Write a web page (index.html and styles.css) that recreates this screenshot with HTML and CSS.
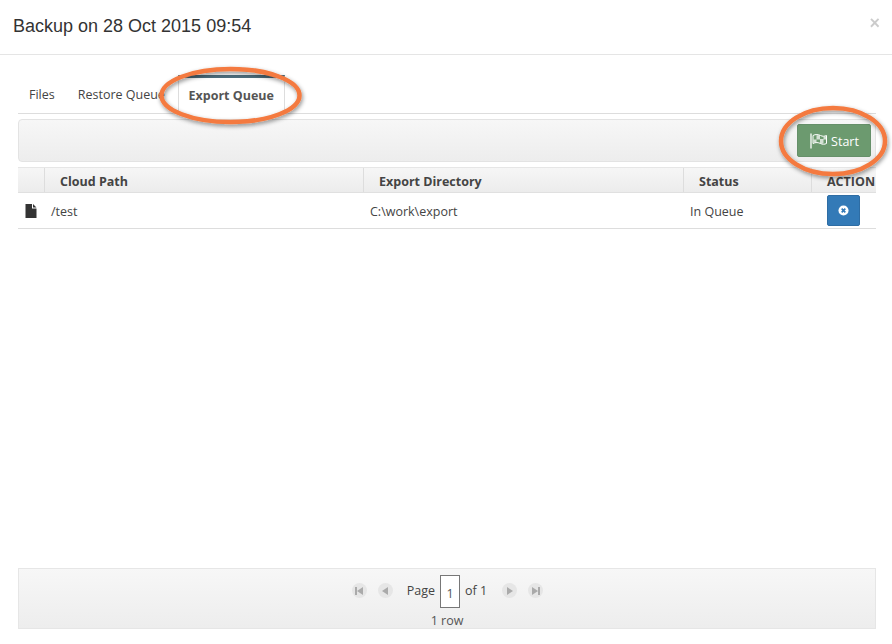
FILE: index.html
```html
<!DOCTYPE html>
<html lang="en">
<head>
<meta charset="utf-8">
<title>Backup</title>
<link rel="stylesheet" href="styles.css">
</head>
<body>
<div class="modal">
  <header class="modal-header">
    <h1 class="modal-title">Backup on 28 Oct 2015 09:54</h1>
    <span class="close">×</span>
  </header>
  <main class="modal-body">
    <nav class="tabs">
      <a class="tab">Files</a>
      <a class="tab">Restore Queue</a>
      <a class="tab active">Export Queue</a>
    </nav>
    <div class="toolbar">
      <button class="btn-start">
        <svg class="flag" viewBox="0 0 18 16" width="19" height="16"><path d="M1.500 0.500V15.500" stroke="#fff" stroke-width="1.300" fill="none"/><path d="M3.500 2.500C6 1 9 1.500 11 2.500S15 3.500 17 2.500V10.500C15 11.500 13 11.500 11 10.500S6 9 3.500 10.500Z" fill="none" stroke="#fff" stroke-width="1"/><path d="M7 2.200H10.500V6H14V3.400H17V6.600H14V10.600H10.500V6.500H7V9.600H4V6.500H7Z" fill="#fff" opacity=".7"/></svg>
        <span class="start-label">Start</span>
      </button>
    </div>
    <div class="thead">
      <div class="th c-icon"></div>
      <div class="th c-path">Cloud Path</div>
      <div class="th c-dir">Export Directory</div>
      <div class="th c-status">Status</div>
      <div class="th c-action">ACTION</div>
    </div>
    <div class="row">
      <div class="td c-icon">
        <svg viewBox="0 0 12 14" width="12" height="14"><path d="M0.500 0H7V4.500H11.500V14H0.500Z M8 0L11.500 3.500H8Z" fill="#333"/></svg>
      </div>
      <div class="td c-path test">/test</div>
      <div class="td c-dir">C:\work\export</div>
      <div class="td c-status">In Queue</div>
      <div class="td c-action">
        <button class="btn-remove">
          <svg viewBox="0 0 12 12" width="11" height="11"><circle cx="6" cy="6" r="5.500" fill="#fff"/><path d="M4 4L8 8M8 4L4 8" stroke="#337ab7" stroke-width="1.800"/></svg>
        </button>
      </div>
    </div>
    <div class="spacer"></div>
    <footer class="pager">
      <div class="pager-line">
        <span class="nav-btn first"><svg viewBox="0 0 10 10" width="10" height="10"><path d="M1 1H3V9H1ZM9 1V9L3 5Z" fill="#aaa"/></svg></span>
        <span class="nav-btn gap-right"><svg viewBox="0 0 10 10" width="10" height="10"><path d="M8 1V9L2 5Z" fill="#aaa"/></svg></span>
        <span class="label page-label">Page</span>
        <span class="page-input">1</span>
        <span class="label of-label">of 1</span>
        <span class="nav-btn gap-left"><svg viewBox="0 0 10 10" width="10" height="10"><path d="M2 1V9L8 5Z" fill="#aaa"/></svg></span>
        <span class="nav-btn"><svg viewBox="0 0 10 10" width="10" height="10"><path d="M9 1H7V9H9ZM1 1V9L7 5Z" fill="#aaa"/></svg></span>
      </div>
      <div class="pager-count">1 row</div>
    </footer>
  </main>
</div>
<svg class="overlay" viewBox="0 0 892 644" width="892" height="644">
  <defs>
    <filter id="sh" x="-20%" y="-40%" width="140%" height="180%"><feDropShadow dx="1" dy="2" stdDeviation="2" flood-color="#000" flood-opacity=".45"/></filter>
  </defs>
  <ellipse cx="230.500" cy="95.500" rx="69" ry="26.500" fill="none" stroke="#f47a3f" stroke-width="4.500" filter="url(#sh)"/>
  <ellipse cx="833" cy="141" rx="52" ry="33" fill="none" stroke="#f47a3f" stroke-width="4.500" filter="url(#sh)"/>
</svg>
</body>
</html>
```

FILE: styles.css
```css
* { box-sizing: border-box; }
html, body { margin: 0; height: 644px; overflow: hidden; background: #fff; }
body { font-family: "Open Sans", sans-serif; font-size: 12.5px; color: #333; position: relative; }
.modal { width: 892px; height: 644px; display: flex; flex-direction: column; }
.modal-header { height: 55px; border-bottom: 1px solid #e5e5e5; padding: 0 13px; display: flex; align-items: center; justify-content: space-between; flex: none; }
.modal-title { margin: 0; font: 400 18px/1.1 "Liberation Sans", sans-serif; color: #333; }
.close { font: 700 18px/1 "Liberation Sans", sans-serif; color: #000; opacity: .2; margin-right: -1px; position: relative; top: -4px; }
.modal-body { flex: 1; padding: 20px 16px 15px 18px; display: flex; flex-direction: column; min-height: 0; }
.tabs { display: flex; height: 39px; border-bottom: 1px solid #ddd; flex: none; }
.tab { display: flex; align-items: center; padding: 0 11px; margin-right: 1px; color: #444; }
.tab:nth-child(2) { width: 111px; margin-right: 0; white-space: nowrap; }
.tab.active { width: 107px; margin-right: 0; justify-content: center; padding: 0; font-weight: 700; color: #555; border: 1px solid #ddd; border-top: 3px solid #4d6d7c; border-bottom: 1px solid #fff; height: 39px; background: #fff; }
.toolbar { margin-top: 5px; height: 43px; flex: none; border: 1px solid #e3e3e3; border-radius: 4px; background: linear-gradient(#f7f7f7, #ededed); display: flex; align-items: center; justify-content: flex-end; padding-right: 4px; }
.btn-start { width: 74px; height: 33px; border: 1px solid #66906a; border-radius: 2px; background: #6c9a6f; color: #fff; font: 12.5px "Open Sans", sans-serif; display: flex; align-items: center; justify-content: center; gap: 3px; padding: 0; }
.start-label { padding-top: 2px; }
.flag { flex: none; }
.thead { margin-top: 5px; height: 26px; flex: none; display: flex; background: linear-gradient(#f6f6f6, #ececec); border-top: 1px solid #e6e6e6; border-bottom: 1px solid #e0e0e0; }
.th { font-weight: 700; color: #444; display: flex; align-items: center; border-right: 1px solid #ddd; padding-top: 2px; }
.row { height: 36px; flex: none; display: flex; border-bottom: 1px solid #ddd; }
.td { display: flex; align-items: center; color: #444; padding-top: 2px; }
.c-icon { width: 27px; flex: none; }
.td.c-icon { padding: 0 0 0 7px; }
.c-path { width: 319px; flex: none; }
.th.c-path { padding-left: 15px; }
.td.test { padding-left: 6px; }
.c-dir { width: 320px; flex: none; }
.th.c-dir { padding-left: 15px; }
.td.c-dir { padding-left: 6px; }
.c-status { width: 128px; flex: none; }
.th.c-status { padding-left: 15px; }
.td.c-status { padding-left: 6px; }
.c-action { flex: 1; min-width: 0; }
.th.c-action { border-right: 0; padding-left: 15px; white-space: nowrap; overflow: hidden; }
.td.c-action { padding: 0 0 0 15px; }
.btn-remove { width: 33px; height: 31px; border: 1px solid #2e6da4; border-radius: 2px; background: #337ab7; display: flex; align-items: center; justify-content: center; padding: 0; }
.spacer { flex: 1; }
.pager { height: 61px; flex: none; border: 1px solid #e6e6e6; background: linear-gradient(#f7f7f7, #ededed); display: flex; flex-direction: column; align-items: center; }
.pager-line { margin-top: 6px; height: 33px; display: flex; align-items: center; gap: 4px; color: #444; }
.label { margin-bottom: 2px; }
.page-label { margin-right: 1px; }
.of-label { margin-left: 1px; }
.nav-btn { width: 15px; height: 15px; border-radius: 50%; background: #e6e6e6; display: flex; align-items: center; justify-content: center; margin: 0 3.5px 2px; }
.first { margin-left: 4.5px; }
.gap-right { margin-right: 10px; }
.gap-left { margin-left: 11px; }
.page-input { width: 20px; height: 33px; border: 1px solid #777; background: #fff; display: flex; align-items: center; justify-content: center; padding-top: 4px; color: #555; }
.pager-count { color: #555; margin-top: 5px; line-height: 16px; }
.overlay { position: absolute; left: 0; top: 0; pointer-events: none; }
```
